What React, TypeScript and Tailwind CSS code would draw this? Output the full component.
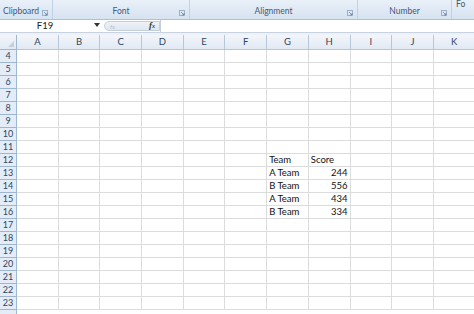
import React from "react";

const cols = ["A", "B", "C", "D", "E", "F", "G", "H", "I", "J", "K"];
const rows = Array.from({ length: 20 }, (_, i) => i + 4);

const data: Record<string, { v: string; right?: boolean }> = {
  G12: { v: "Team" },
  H12: { v: "Score" },
  G13: { v: "A Team" },
  H13: { v: "244", right: true },
  G14: { v: "B Team" },
  H14: { v: "556", right: true },
  G15: { v: "A Team" },
  H15: { v: "434", right: true },
  G16: { v: "B Team" },
  H16: { v: "334", right: true },
};

const groups = [
  { name: "Clipboard", w: "w-[53px]", align: "justify-start pl-[3px]" },
  { name: "Font", w: "w-[137px]", align: "justify-center" },
  { name: "Alignment", w: "w-[168px]", align: "justify-center" },
  { name: "Number", w: "w-[94px]", align: "justify-center" },
];

function Launcher() {
  return (
    <svg width="6" height="6" viewBox="0 0 6 6" className="absolute right-[4px] top-[10px]">
      <rect x="0.5" y="0.5" width="5" height="5" fill="none" stroke="#8ea3bf" strokeWidth="0.8" />
      <path d="M2 2 L5 5 M5 3 V5 H3" stroke="#6d84a4" strokeWidth="0.8" fill="none" />
    </svg>
  );
}

export default function App() {
  return (
    <div
      className="w-[474px] h-[314px] overflow-hidden bg-white select-none"
      style={{ fontFamily: "Lato, 'Open Sans', sans-serif" }}
    >
      {/* ribbon group labels */}
      <div className="h-[20px] flex bg-gradient-to-b from-[#e9f0f8] to-[#d7e3f1] border-b border-[#aebfd6]">
        {groups.map((g) => (
          <div
            key={g.name}
            className={`relative ${g.w} flex items-end pb-[1px] ${g.align} border-r border-[#c3d1e4] text-[8.5px] text-[#3e5a7d]`}
          >
            {g.name}
            <Launcher />
          </div>
        ))}
        <div className="flex-1 flex items-start pl-[4px] text-[8.5px] text-[#3e5a7d] leading-[8px]">Fo</div>
      </div>

      {/* formula bar */}
      <div className="h-[13px] flex items-stretch bg-white border-b border-[#c7d3e2]">
        <div className="w-[104px] relative flex items-center justify-center text-[9.5px] text-[#222]">
          <span className="ml-[-14px]">F19</span>
          <span className="absolute right-[4px] top-[3px] w-0 h-0 border-l-[3px] border-r-[3px] border-t-[4px] border-l-transparent border-r-transparent border-t-[#333]" />
        </div>
        <div className="w-[56px] my-[1px] rounded-l-full bg-gradient-to-b from-[#eef2f7] to-[#dfe6ef] border border-[#c5cfdc] flex items-center justify-between pl-[5px] pr-[4px]">
          <span className="text-[6px] text-[#b8c2cf]">fx</span>
          <span className="text-[9px] italic font-bold text-[#3a3a3a]" style={{ fontFamily: "'Liberation Serif', serif" }}>
            f<span className="text-[6px]">x</span>
          </span>
        </div>
        <div className="flex-1 border-l border-[#c5cfdc]" />
      </div>

      <div className="h-[2px] bg-[#eef2f7]" />

      {/* grid */}
      <div className="grid grid-cols-[17px_repeat(11,41.7px)] text-[9.5px]">
        <div className="h-[15px] bg-gradient-to-b from-[#f3f6fa] to-[#e1e9f4] border-r border-b border-[#9eb6ce] flex items-end justify-end p-[2px]">
          <span className="w-0 h-0" style={{ borderBottom: "6px solid #c3cfdd", borderLeft: "6px solid transparent" }} />
        </div>
        {cols.map((c) => (
          <div
            key={c}
            className="h-[15px] bg-gradient-to-b from-[#f3f6fa] to-[#e1e9f4] border-r border-b border-[#b7c7da] flex items-center justify-center text-[#2f4660]"
          >
            {c}
          </div>
        ))}
        {rows.map((r) => (
          <React.Fragment key={r}>
            <div className="h-[13px] bg-[#e4ecf7] border-r border-b border-[#9eb6ce] flex items-center justify-center text-[9px] text-[#2f4660]">
              {r}
            </div>
            {cols.map((c) => {
              const d = data[c + r];
              return (
                <div
                  key={c}
                  className={`h-[13px] border-r border-b border-[#dadcdd] flex items-center px-[2px] text-[#111] ${
                    d?.right ? "justify-end" : "justify-start"
                  }`}
                >
                  {d?.v}
                </div>
              );
            })}
          </React.Fragment>
        ))}
        <div className="h-[4px] bg-[#e4ecf7] border-r border-[#9eb6ce]" />
      </div>
    </div>
  );
}
